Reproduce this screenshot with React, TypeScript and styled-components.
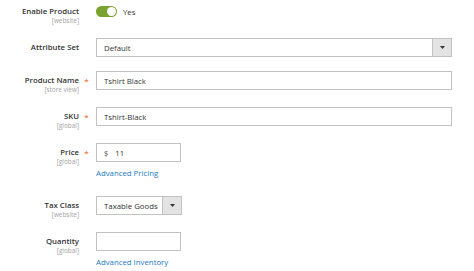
import React from 'react'
import styled, { createGlobalStyle } from 'styled-components'

interface FieldProps {
  label: string
  scope?: string
  required?: boolean
  children: React.ReactNode
}

const GlobalStyle = createGlobalStyle`
  html, body {
    margin: 0;
    padding: 0;
    background: #fff;
  }
  body {
    font-family: "Open Sans", "Liberation Sans", sans-serif;
    color: #303030;
  }
`

const Field = ({ label, scope, required, children }: FieldProps) => (
  <StyledField>
    <StyledLabelBox>
      <StyledLabel>{label}</StyledLabel>
      {scope ? <StyledScope>[{scope}]</StyledScope> : null}
    </StyledLabelBox>
    <StyledMarker>{required ? '*' : ''}</StyledMarker>
    <StyledControl>{children}</StyledControl>
  </StyledField>
)

const Select = ({ value, width }: { value: string; width?: number }) => (
  <StyledSelect style={width ? { width } : undefined}>
    <StyledSelectValue>{value}</StyledSelectValue>
    <StyledSelectButton>
      <svg width="5" height="3" viewBox="0 0 5 3">
        <path d="M0 0 L5 0 L2.5 3 Z" fill="#333" />
      </svg>
    </StyledSelectButton>
  </StyledSelect>
)

const App = () => {
  return (
    <StyledWrapper>
      <GlobalStyle />
      <Field label="Enable Product" scope="website">
        <StyledToggleRow>
          <StyledToggle>
            <StyledKnob />
          </StyledToggle>
          <StyledToggleText>Yes</StyledToggleText>
        </StyledToggleRow>
      </Field>

      <Field label="Attribute Set">
        <Select value="Default" />
      </Field>

      <Field label="Product Name" scope="store view" required>
        <StyledInput>Tshirt Black</StyledInput>
      </Field>

      <Field label="SKU" scope="global" required>
        <StyledInput>Tshirt-Black</StyledInput>
      </Field>

      <Field label="Price" scope="global" required>
        <StyledInput $small>
          <StyledAddon>$</StyledAddon>11
        </StyledInput>
        <StyledLink>Advanced Pricing</StyledLink>
      </Field>

      <Field label="Tax Class" scope="website">
        <Select value="Taxable Goods" width={86} />
      </Field>

      <Field label="Quantity" scope="global">
        <StyledInput $small />
        <StyledLink>Advanced Inventory</StyledLink>
      </Field>
    </StyledWrapper>
  )
}

const StyledWrapper = styled.section`
  width: 474px;
  height: 271px;
  overflow: hidden;
  padding: 2px 22px 0 0;
  box-sizing: border-box;
`

const StyledField = styled.div`
  display: grid;
  grid-template-columns: 80px 16px 1fr;
  margin-bottom: 14px;
`

const StyledLabelBox = styled.div`
  display: flex;
  flex-direction: column;
  align-items: flex-end;
  padding-top: 4px;
  padding-right: 1px;
`

const StyledLabel = styled.span`
  font-size: 7.8px;
  font-weight: 600;
  line-height: 11px;
  color: #333;
  white-space: nowrap;
`

const StyledScope = styled.span`
  font-size: 6.4px;
  line-height: 7px;
  color: #a3a3a3;
  white-space: nowrap;
`

const StyledMarker = styled.span`
  color: #eb5202;
  font-size: 8px;
  line-height: 12px;
  padding-top: 4px;
  text-align: center;
  padding-right: 3px;
`

const StyledControl = styled.div`
  display: flex;
  flex-direction: column;
  align-items: flex-start;
`

const StyledToggleRow = styled.div`
  display: flex;
  align-items: center;
  height: 19px;
`

const StyledToggle = styled.span`
  position: relative;
  width: 21px;
  height: 11px;
  border-radius: 6px;
  background: #79a22e;
`

const StyledKnob = styled.span`
  position: absolute;
  right: 1px;
  top: 1px;
  width: 9px;
  height: 9px;
  border-radius: 50%;
  background: #fff;
`

const StyledToggleText = styled.span`
  margin-left: 6px;
  font-size: 7.8px;
  color: #333;
`

const StyledInput = styled.div<{ $small?: boolean }>`
  display: flex;
  align-items: center;
  width: ${(p) => (p.$small ? '85px' : '356px')};
  height: 19px;
  box-sizing: border-box;
  border: 1px solid #c2c2c2;
  background: #fff;
  padding-left: 7px;
  font-size: 7.8px;
  color: #333;
  white-space: nowrap;
`

const StyledAddon = styled.span`
  margin-right: 7px;
  color: #555;
  font-size: 7.4px;
`

const StyledSelect = styled.div`
  display: flex;
  width: 356px;
  height: 19px;
  box-sizing: border-box;
  border: 1px solid #c2c2c2;
  background: #fff;
`

const StyledSelectValue = styled.span`
  flex: 1;
  display: flex;
  align-items: center;
  padding-left: 7px;
  font-size: 7.8px;
  color: #333;
  white-space: nowrap;
`

const StyledSelectButton = styled.span`
  width: 18px;
  display: flex;
  align-items: center;
  justify-content: center;
  background: #e3e3e3;
  border-left: 1px solid #c2c2c2;
`

const StyledLink = styled.a`
  margin: 5px 0 3px;
  font-size: 7.8px;
  line-height: 12px;
  color: #1979c3;
  cursor: pointer;
`

export default App
